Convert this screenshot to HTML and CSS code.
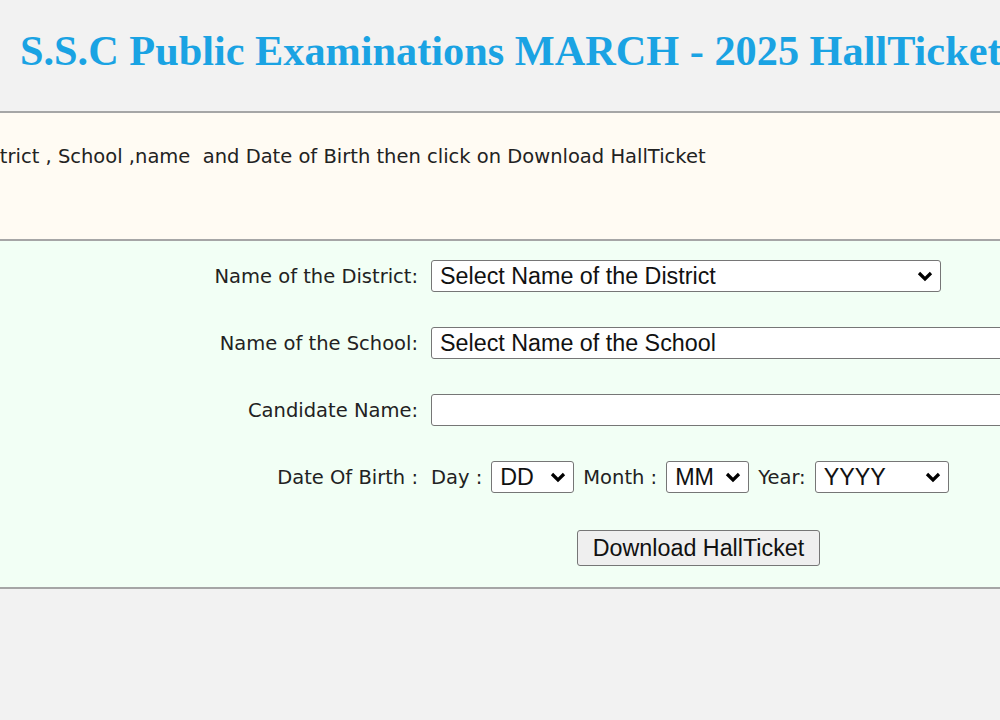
FILE: index.html
```html
<!DOCTYPE html>
<html lang="en">
<head>
  <meta charset="UTF-8">
  <title>S.S.C Public Examinations MARCH - 2025 HallTicket</title>
  <link rel="stylesheet" href="styles.css">
</head>
<body>
  <div class="header">
    <h1>S.S.C Public Examinations MARCH - 2025 HallTicket</h1>
  </div>

  <div class="note">
    <p>Select Name of the District , School ,name&nbsp; and Date of Birth then click on Download HallTicket</p>
  </div>

  <form class="form-panel" onsubmit="return false;">
    <div class="row">
      <label for="district">Name of the District:</label>
      <span class="sel district">
        <select id="district"><option>Select Name of the District</option></select>
        <svg class="chev" width="16" height="11" viewBox="0 0 16 11"><path d="M2 2 L8 8 L14 2" /></svg>
      </span>
    </div>
    <div class="row">
      <label for="school">Name of the School:</label>
      <span class="sel wide">
        <select id="school"><option>Select Name of the School</option></select>
        <svg class="chev" width="16" height="11" viewBox="0 0 16 11"><path d="M2 2 L8 8 L14 2" /></svg>
      </span>
    </div>
    <div class="row">
      <label for="cname">Candidate Name:</label>
      <input type="text" id="cname" class="wide">
    </div>
    <div class="row">
      <label>Date Of Birth :</label>
      <div class="dob">
        <span>Day :</span>
        <span class="sel small">
          <select><option>DD</option></select>
          <svg class="chev" width="16" height="11" viewBox="0 0 16 11"><path d="M2 2 L8 8 L14 2" /></svg>
        </span>
        <span>Month :</span>
        <span class="sel small">
          <select><option>MM</option></select>
          <svg class="chev" width="16" height="11" viewBox="0 0 16 11"><path d="M2 2 L8 8 L14 2" /></svg>
        </span>
        <span>Year:</span>
        <span class="sel year">
          <select><option>YYYY</option></select>
          <svg class="chev" width="16" height="11" viewBox="0 0 16 11"><path d="M2 2 L8 8 L14 2" /></svg>
        </span>
      </div>
    </div>
    <div class="row btn-row">
      <span></span>
      <button type="submit">Download HallTicket</button>
    </div>
  </form>
</body>
</html>
```

FILE: styles.css
```css
body {
  margin: 0;
  background: #f2f2f2;
  font-family: "DejaVu Sans", Verdana, sans-serif;
  color: #222;
  overflow: hidden;
}
.header {
  height: 111px;
  border-bottom: 2px solid #a6a6a6;
}
h1 {
  margin: 0;
  padding: 27px 0 0 20px;
  line-height: 48px;
  font-family: "Liberation Serif", "Times New Roman", serif;
  font-size: 42.3px;
  font-weight: bold;
  color: #1aa3e3;
  white-space: nowrap;
}
.note {
  height: 126px;
  background: #fffbf3;
  border-bottom: 2px solid #a6a6a6;
}
.note p {
  margin: 0 0 0 -224px;
  padding-top: 32px;
  font-size: 19.5px;
  white-space: nowrap;
}
.form-panel {
  display: flex;
  flex-direction: column;
  gap: 35px;
  padding: 19px 0 21px;
  background: #f2fff5;
  border-bottom: 2px solid #a6a6a6;
}
.row {
  display: grid;
  grid-template-columns: 418px auto;
  column-gap: 13px;
  align-items: center;
  height: 32px;
  font-size: 19.5px;
}
.row label {
  text-align: right;
  white-space: nowrap;
}
.sel {
  position: relative;
  display: inline-block;
  height: 32px;
}
.sel select {
  width: 100%;
}
.chev {
  position: absolute;
  right: 8px;
  top: 11px;
  pointer-events: none;
}
.chev path {
  fill: none;
  stroke: #000;
  stroke-width: 3.2;
}
select, input {
  box-sizing: border-box;
  height: 32px;
  font-family: "Liberation Sans", Arial, sans-serif;
  font-size: 23.3px;
  color: #111;
  background: #fff;
  border: 1px solid #767676;
  border-radius: 3px;
  padding: 0 8px;
  appearance: none;
  -webkit-appearance: none;
}
.district { width: 510px; }
.wide { width: 620px; }
.small { width: 83px; }
.year { width: 134px; }
.dob {
  display: flex;
  align-items: center;
  gap: 9px;
  white-space: nowrap;
}
.btn-row {
  margin-top: 2px;
  height: 36px;
}
button {
  margin-left: 146px;
  width: 243px;
  height: 36px;
  font-family: "Liberation Sans", Arial, sans-serif;
  font-size: 23.3px;
  color: #111;
  background: #efefef;
  border: 1px solid #767676;
  border-radius: 3px;
}
```
